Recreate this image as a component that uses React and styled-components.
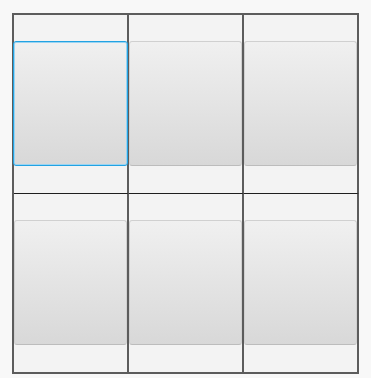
import React from 'react'
import styled, { createGlobalStyle } from 'styled-components'

const GlobalStyle = createGlobalStyle`
  html, body {
    margin: 0;
    padding: 0;
    background: #f8f8f8;
    font-family: "Liberation Sans", Arial, sans-serif;
  }
`

const Page = styled.div`
  padding: 13px 0 0 12px;
`

const Table = styled.div`
  display: grid;
  grid-template-columns: repeat(3, 115px);
  width: max-content;
  border-top: 2px solid #5c5c5c;
  border-left: 2px solid #5c5c5c;
  background: #f3f3f3;
`

const Cell = styled.div`
  box-sizing: border-box;
  padding-top: 26px;
  border-right: 2px solid #5c5c5c;
  border-bottom: ${p => (p.$last ? '2px solid #5c5c5c' : '1px solid #1e1e1e')};
  display: flex;
  justify-content: center;
  align-items: flex-start;
  height: ${p => (p.$last ? '180px' : '179px')};
`

const Button = styled.button`
  flex: none;
  width: ${p => (p.$selected ? '115px' : '113px')};
  margin: ${p => (p.$selected ? '0 -1px' : '0')};
  height: 125px;
  box-sizing: border-box;
  border-radius: 3px;
  border: 1px solid ${p => (p.$selected ? '#22a2e2' : '#d0d0d0')};
  border-bottom-color: ${p => (p.$selected ? '#22a2e2' : '#bcbcbc')};
  box-shadow: ${p => (p.$selected ? 'inset 0 0 0 1px #9ad4f2' : 'none')};
  background: linear-gradient(to bottom, #f0f0f0, #d8d8d8);
  padding: 0;
  outline: none;
`

const cells = [0, 1, 2, 3, 4, 5]

export default function App() {
  return (
    <>
      <GlobalStyle />
      <Page>
        <Table>
          {cells.map(i => (
            <Cell key={i} $last={i >= 3}>
              <Button $selected={i === 0} />
            </Cell>
          ))}
        </Table>
      </Page>
    </>
  )
}
